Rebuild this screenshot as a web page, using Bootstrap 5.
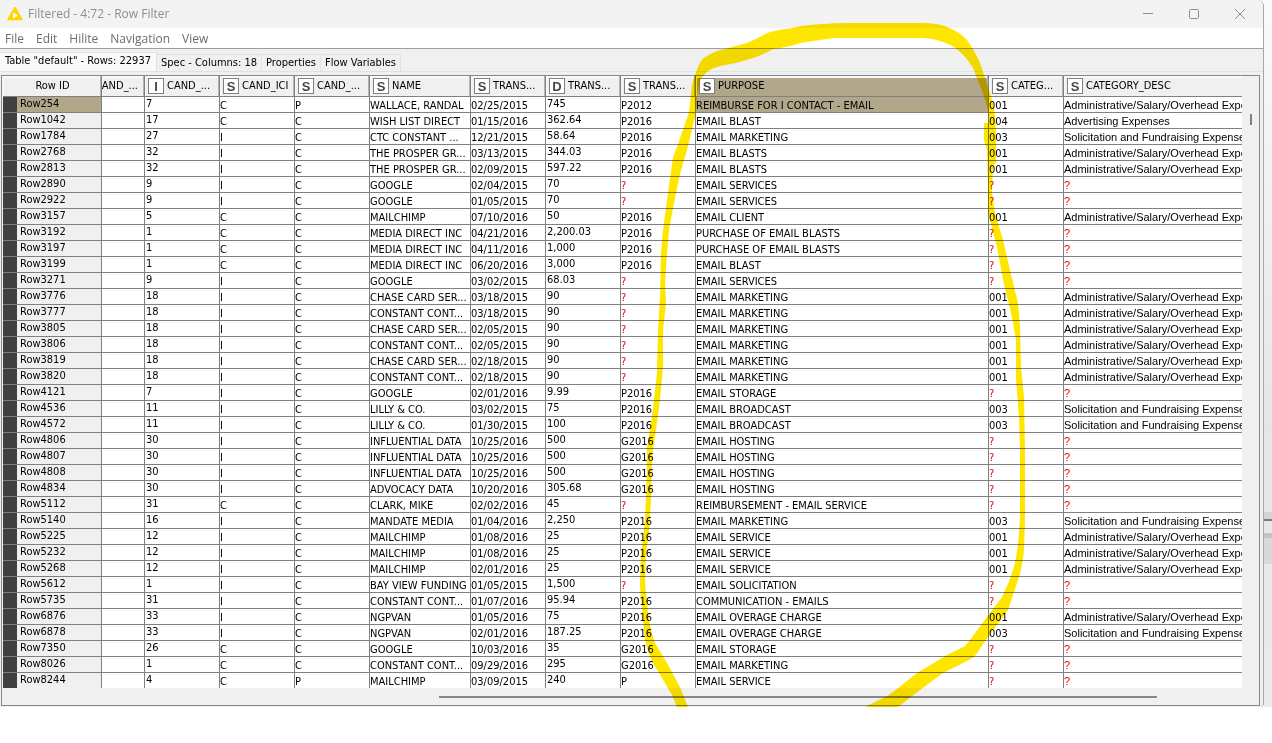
<!DOCTYPE html>
<html lang="en">
<head>
<meta charset="utf-8">
<meta name="viewport" content="width=device-width, initial-scale=1">
<title>Filtered - 4:72 - Row Filter</title>
<link rel="stylesheet" href="https://cdn.jsdelivr.net/npm/bootstrap@5.3.0/dist/css/bootstrap.min.css">
<style>
  :root { --grid: #808080; --frame: #828790; --panel: #f0f0f0; --hit: #b2a68b; }
  body { font-family: "DejaVu Sans Condensed", "DejaVu Sans", sans-serif; font-size: 11px; line-height: 14px; color: #000; background: #fff; overflow-x: hidden; }
  .app-window { min-width: 0; padding-bottom: 1px; background: var(--panel); border-right: 1px solid #a8a8a8; border-radius: 0 6px 4px 0; }
  .title-bar { height: 28px; background: #f3f3f3; color: #8e8e8e; font-family: "Open Sans", sans-serif; font-size: 12px; padding-left: 6px; border-top-right-radius: 6px; }
  .win-btn { width: 46px; height: 28px; color: #8e8e8e; background: none; border: 0; padding: 0; }
  .menu-bar { height: 21px; border-bottom: 1px solid #a0a0a0; font-family: "Open Sans", sans-serif; font-size: 12px; padding: 2px 0 0 5px; gap: 12px; }
  .menu-bar a { color: #6d6d6d; text-decoration: none; }
  .tab-strip { height: 23px; padding-top: 3px; border-bottom: 1px solid #e2e2e2; }
  .tab-btn { height: 17px; padding: 0 4px; border: 1px solid #e2e2e2; border-width: 1px 1px 0 0; background: var(--panel); color: #000; white-space: nowrap; }
  .tab-btn.current { height: 19px; padding: 0 5px 2px; background: #fafafa; border-left: 0; }
  .view-frame { margin: 3px 3px 0 1px; border: 1px solid var(--frame); padding-left: 1px; }
  .view-port { min-width: 0; overflow: hidden; background: #fff; }
  .data-grid { width: 100%; table-layout: fixed; border-collapse: separate; border-spacing: 0; }
  .data-grid th, .data-grid td { border: 0 solid var(--grid); border-width: 0 1px 1px 0; font-weight: 400; overflow: hidden; white-space: nowrap; }
  .data-grid td { padding: 2px 0 0; line-height: 13px; }
  .data-grid td.num, .data-grid tbody th { padding: 0 0 1px 1px; line-height: 14px; }
  .data-grid td:last-child { font-family: "Liberation Sans", sans-serif; }
  .data-grid tr > :last-child { border-right: 0; }
  .data-grid tbody tr:last-child > * { border-bottom: 0; }
  .data-grid tbody th { background: var(--panel); box-shadow: inset 14px 0 #404040; padding-left: 17px; text-align: left; }
  .data-grid thead th { height: 21px; padding: 0; background: var(--panel); box-shadow: inset -1px 0 #b4b4b4, inset 1px 2px #fafafa; }
  .data-grid thead th:last-child { box-shadow: inset 1px 2px #fafafa; }
  .head-cell { gap: 3px; padding: 0 2px 0 3px; height: 20px; }
  .head-cell.cut { padding-right: 6px; }
  .data-grid .hit { background: var(--hit); }
  .kind { flex: none; width: 16px; height: 16px; border: 1px solid #808080; background: #fff; color: #484848; font: bold 13px/15px "Liberation Sans", sans-serif; text-align: center; }
  .none { color: #f00000; }
  .v-track { flex: none; width: 17px; padding: 38px 0 0 8px; }
  .v-thumb { width: 2px; height: 11px; background: var(--grid); }
  .h-track { height: 17px; }
  .h-thumb { height: 2px; background: #868686; }
  .marker { position: absolute; left: 0; top: 0; mix-blend-mode: multiply; pointer-events: none; }
  .backdrop-edge { flex: none; width: 8px; background: linear-gradient(#fafafa, #e6e6e6 60%, #ebebeb); }
  .edge-gap { height: 512px; }
  .edge-tab { height: 9px; background: #d4d4d4; border-bottom: 2px solid #7c7c7c; }
  .edge-bar { height: 5px; margin-top: 12px; background: #c4c4c4; }
  .edge-box { height: 26px; background: #d9d9d9; }
</style>
</head>
<body class="position-relative">
<div class="d-flex">
  <main class="app-window flex-grow-1">
    <header class="title-bar d-flex align-items-center">
      <svg width="18" height="16" viewBox="0 0 18 16" aria-hidden="true"><path d="M9 1.500 16 13.500H2Z" fill="#ffd500" stroke="#ffd500" stroke-width="1.500" stroke-linejoin="round"/><path d="M7 6.500v6l5-3z" fill="#fff"/></svg>
      <span class="ms-1 me-auto">Filtered - 4:72 - Row Filter</span>
      <button class="win-btn" type="button" aria-label="Minimize"><svg width="12" height="12" viewBox="0 0 12 12"><path d="M1 4.500h10" stroke="currentColor"/></svg></button>
      <button class="win-btn" type="button" aria-label="Maximize"><svg width="12" height="12" viewBox="0 0 12 12"><rect x="1.500" y=".500" width="9" height="9" rx="1" fill="none" stroke="currentColor"/></svg></button>
      <button class="win-btn" type="button" aria-label="Close"><svg width="12" height="12" viewBox="0 0 12 12"><path d="M1 0l10 10M11 0 1 10" stroke="currentColor"/></svg></button>
    </header>
    <nav class="menu-bar d-flex align-items-center bg-white">
      <a href="#">File</a><a href="#">Edit</a><a href="#">Hilite</a><a href="#">Navigation</a><a href="#">View</a>
    </nav>
    <div class="tab-strip d-flex align-items-end" role="tablist">
      <button class="tab-btn current" type="button" role="tab" aria-selected="true">Table "default" - Rows: 22937</button>
      <button class="tab-btn" type="button" role="tab">Spec - Columns: 18</button>
      <button class="tab-btn" type="button" role="tab">Properties</button>
      <button class="tab-btn" type="button" role="tab">Flow Variables</button>
    </div>
    <section class="view-frame">
      <div class="d-flex">
        <div class="view-port flex-grow-1">
          <table class="data-grid">
            <colgroup id="cols"></colgroup>
            <thead><tr id="head"></tr></thead>
            <tbody id="rows"></tbody>
          </table>
        </div>
        <div class="v-track"><div class="v-thumb"></div></div>
      </div>
      <div class="h-track d-flex align-items-center">
        <div style="flex:436"></div><div class="h-thumb" style="flex:718"></div><div style="flex:102"></div>
      </div>
    </section>
  </main>
  <aside class="backdrop-edge" aria-hidden="true">
    <div class="edge-gap"></div><div class="edge-tab"></div><div class="edge-bar"></div><div class="edge-box"></div>
  </aside>
</div>
<svg class="marker" width="1272" height="707" viewBox="0 0 1272 707" aria-hidden="true">
  <path fill="#ffe600" d="M677 707L672 695L653 663Q647 650 645 640L642 607Q640 592 640 580L641 555L645 520L647 473V447L652 417L657 373L658 330L660 297L661 253L663 230L668 193L673 157L677 147L689 112L692 85Q694 76 697 70Q699 62 704 58Q709 54 717 51L747 43Q757 39 767 33Q776 30 793 28Q803 24 847 23H923Q937 23 947 27Q960 32 967 40Q976 53 980 63L988 87L993 103Q996 118 996 133V163L993 165L992 193L995 213L1003 240L1010 270L1018 303L1020 327L1021 367L1024 397L1025 450V520L1024 550Q1022 569 1018 580L1008 610L988 637L977 653Q975 657 969 660L943 673L920 690L898 707H865L887 696L893 692L917 673L947 655L965 646L970 640L987 617L1002 597Q1009 583 1013 570Q1018 555 1020 517V450L1019 417L1016 380V340L1012 317L1003 280L997 247L988 213V183L987 150L984 140V123H989L988 110L983 93L973 68Q967 58 960 52Q953 45 943 42Q932 38 920 38H833L800 43Q789 47 773 49Q763 55 750 59Q735 64 720 66Q710 69 707 72Q702 77 700 80L697 97L695 117L687 150L680 174L674 203L669 230L667 253L665 283L666 303L663 330V367L660 400L655 437L652 457L651 500L649 533L646 553L645 583L648 613Q650 629 655 643L667 663L680 687L688 707Z"/>
</svg>
<script>
  // width, type, heading
  const columns = [
    [99, '', 'Row ID'], [43, '', 'CAND_...'], [75, 'I', 'CAND_...'], [75, 'S', 'CAND_ICI'], [75, 'S', 'CAND_...'],
    [101, 'S', 'NAME'], [75, 'S', 'TRANS...'], [75, 'D', 'TRANS...'], [75, 'S', 'TRANS...'],
    [293, 'S', 'PURPOSE'], [75, 'S', 'CATEG...'], [0, 'S', 'CATEGORY_DESC']
  ];
  // category code | description
  const A = '001|Administrative/Salary/Overhead Expenses', V = '004|Advertising Expenses', F = '003|Solicitation and Fundraising Expenses', N = '?|?';
  const data = [
    `254|7|C|P|WALLACE, RANDAL|02/25/2015|745|P2012|REIMBURSE FOR I CONTACT - EMAIL|${A}`,
    `1042|17|C|C|WISH LIST DIRECT|01/15/2016|362.64|P2016|EMAIL BLAST|${V}`,
    `1784|27|I|C|CTC CONSTANT ...|12/21/2015|58.64|P2016|EMAIL MARKETING|${F}`,
    `2768|32|I|C|THE PROSPER GR...|03/13/2015|344.03|P2016|EMAIL BLASTS|${A}`,
    `2813|32|I|C|THE PROSPER GR...|02/09/2015|597.22|P2016|EMAIL BLASTS|${A}`,
    `2890|9|I|C|GOOGLE|02/04/2015|70|?|EMAIL SERVICES|${N}`,
    `2922|9|I|C|GOOGLE|01/05/2015|70|?|EMAIL SERVICES|${N}`,
    `3157|5|C|C|MAILCHIMP|07/10/2016|50|P2016|EMAIL CLIENT|${A}`,
    `3192|1|C|C|MEDIA DIRECT INC|04/21/2016|2,200.03|P2016|PURCHASE OF EMAIL BLASTS|${N}`,
    `3197|1|C|C|MEDIA DIRECT INC|04/11/2016|1,000|P2016|PURCHASE OF EMAIL BLASTS|${N}`,
    `3199|1|C|C|MEDIA DIRECT INC|06/20/2016|3,000|P2016|EMAIL BLAST|${N}`,
    `3271|9|I|C|GOOGLE|03/02/2015|68.03|?|EMAIL SERVICES|${N}`,
    `3776|18|I|C|CHASE CARD SER...|03/18/2015|90|?|EMAIL MARKETING|${A}`,
    `3777|18|I|C|CONSTANT CONT...|03/18/2015|90|?|EMAIL MARKETING|${A}`,
    `3805|18|I|C|CHASE CARD SER...|02/05/2015|90|?|EMAIL MARKETING|${A}`,
    `3806|18|I|C|CONSTANT CONT...|02/05/2015|90|?|EMAIL MARKETING|${A}`,
    `3819|18|I|C|CHASE CARD SER...|02/18/2015|90|?|EMAIL MARKETING|${A}`,
    `3820|18|I|C|CONSTANT CONT...|02/18/2015|90|?|EMAIL MARKETING|${A}`,
    `4121|7|I|C|GOOGLE|02/01/2016|9.99|P2016|EMAIL STORAGE|${N}`,
    `4536|11|I|C|LILLY & CO.|03/02/2015|75|P2016|EMAIL BROADCAST|${F}`,
    `4572|11|I|C|LILLY & CO.|01/30/2015|100|P2016|EMAIL BROADCAST|${F}`,
    `4806|30|I|C|INFLUENTIAL DATA|10/25/2016|500|G2016|EMAIL HOSTING|${N}`,
    `4807|30|I|C|INFLUENTIAL DATA|10/25/2016|500|G2016|EMAIL HOSTING|${N}`,
    `4808|30|I|C|INFLUENTIAL DATA|10/25/2016|500|G2016|EMAIL HOSTING|${N}`,
    `4834|30|I|C|ADVOCACY DATA|10/20/2016|305.68|G2016|EMAIL HOSTING|${N}`,
    `5112|31|C|C|CLARK, MIKE|02/02/2016|45|?|REIMBURSEMENT - EMAIL SERVICE|${N}`,
    `5140|16|I|C|MANDATE MEDIA|01/04/2016|2,250|P2016|EMAIL MARKETING|${F}`,
    `5225|12|I|C|MAILCHIMP|01/08/2016|25|P2016|EMAIL SERVICE|${A}`,
    `5232|12|I|C|MAILCHIMP|01/08/2016|25|P2016|EMAIL SERVICE|${A}`,
    `5268|12|I|C|MAILCHIMP|02/01/2016|25|P2016|EMAIL SERVICE|${A}`,
    `5612|1|I|C|BAY VIEW FUNDING|01/05/2015|1,500|?|EMAIL SOLICITATION|${N}`,
    `5735|31|I|C|CONSTANT CONT...|01/07/2016|95.94|P2016|COMMUNICATION - EMAILS|${N}`,
    `6876|33|I|C|NGPVAN|01/05/2016|75|P2016|EMAIL OVERAGE CHARGE|${A}`,
    `6878|33|I|C|NGPVAN|02/01/2016|187.25|P2016|EMAIL OVERAGE CHARGE|${F}`,
    `7350|26|C|C|GOOGLE|10/03/2016|35|G2016|EMAIL STORAGE|${N}`,
    `8026|1|C|C|CONSTANT CONT...|09/29/2016|295|G2016|EMAIL MARKETING|${N}`,
    `8244|4|C|P|MAILCHIMP|03/09/2015|240|P|EMAIL SERVICE|${N}`
  ];
  document.getElementById('cols').innerHTML = columns.map(([w]) => w ? `<col style="width:${w}px">` : '<col>').join('');
  document.getElementById('head').innerHTML = columns.map(([, kind, name], i) => {
    const align = i === 0 ? 'justify-content-center' : i === 1 ? 'justify-content-end cut' : '';
    return `<th scope="col"${name === 'PURPOSE' ? ' class="hit"' : ''}><div class="head-cell d-flex align-items-center ${align}">${kind ? `<span class="kind">${kind}</span>` : ''}<span>${name}</span></div></th>`;
  }).join('');
  document.getElementById('rows').innerHTML = data.map((line, r) => {
    const [id, ...cells] = line.replace('&', '&amp;').split('|');
    return `<tr><th scope="row"${r ? '' : ' class="hit"'}>Row${id}</th><td></td>` + cells.map((text, c) => {
      const cls = [c === 0 || c === 5 ? 'num' : '', text === '?' ? 'none' : '', r === 0 && c === 7 ? 'hit' : ''].join(' ').trim();
      return `<td${cls ? ` class="${cls}"` : ''}>${text}</td>`;
    }).join('') + '</tr>';
  }).join('');
</script>
<script src="https://cdn.jsdelivr.net/npm/bootstrap@5.3.0/dist/js/bootstrap.bundle.min.js"></script>
</body>
</html>
